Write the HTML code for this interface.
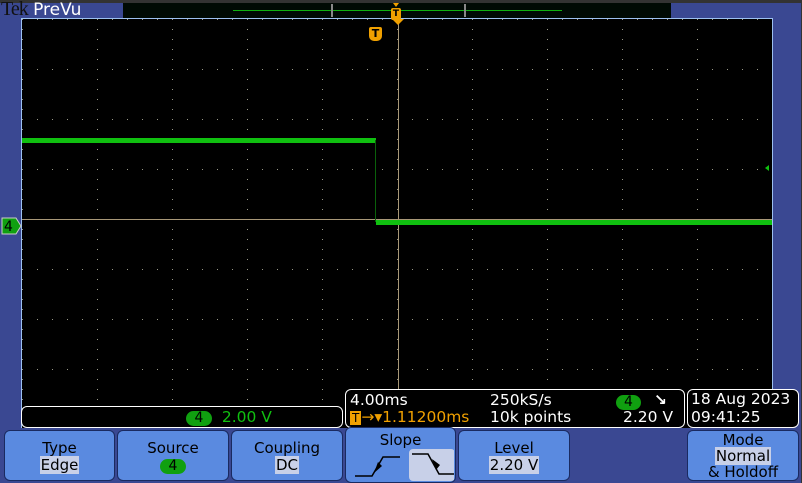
<!DOCTYPE html><html><head><meta charset="utf-8"><style>
*{margin:0;padding:0;box-sizing:border-box}
body{width:802px;height:483px;overflow:hidden;background:#3a4892;font-family:"DejaVu Sans","Liberation Sans",sans-serif;position:relative}
.a{position:absolute}
.btn{position:absolute;top:430px;height:51px;background:#5a8ae0;border:1px solid #1a2a60;border-radius:6px;text-align:center;color:#000;font-size:15px;line-height:17px;padding-top:9px}
.hl{background:#c8d0e8;padding:0 1px}
.pill{display:inline-block;background:#10a010;color:#000;border-radius:9px;width:26px;height:15px;line-height:15px;font-size:14px;text-align:center}
.box{position:absolute;background:#000;border:1px solid #fff;border-radius:6px;color:#fff;font-size:15.5px}
</style></head><body>
<div class="a" style="left:0;top:0;width:802px;height:3px;background:#333"></div>
<div class="a" style="left:1px;top:1px;width:123px;height:17px;color:#fff;font-size:17px;line-height:17px;white-space:nowrap"><span style="font-family:'Liberation Serif',serif;font-size:20px;color:#111;letter-spacing:-1px">Tek</span> PreVu</div>
<div class="a" style="left:123px;top:3px;width:548px;height:15px;background:#000a04"></div>
<div class="a" style="left:233px;top:10px;width:329px;height:1px;background:#10b010"></div>
<div class="a" style="left:331px;top:4px;width:2px;height:13px;background:#888"></div>
<div class="a" style="left:464px;top:4px;width:2px;height:13px;background:#888"></div>
<div class="a" style="left:801px;top:0;width:1px;height:483px;background:#333"></div>
<svg class="a" style="left:21px;top:18px" width="752" height="410">
<defs>
<pattern id="v" x="0" y="1" width="75" height="10" patternUnits="userSpaceOnUse"><rect x="1" y="0" width="1" height="1" fill="#998"/></pattern>
<pattern id="h" x="1" y="1" width="15" height="50" patternUnits="userSpaceOnUse"><rect x="0" y="0" width="1" height="1" fill="#998"/></pattern>
</defs>
<rect x="0" y="0" width="752" height="410" fill="#000"/>
<rect x="0" y="0" width="752" height="410" fill="url(#v)"/>
<rect x="0" y="0" width="752" height="410" fill="url(#h)"/>
<rect x="0" y="201" width="752" height="1" fill="#a89878"/>
<rect x="377" y="0" width="1" height="410" fill="#a89878"/>
<rect x="0" y="0" width="752" height="1" fill="#9cc0f0"/>
<rect x="0" y="0" width="1" height="410" fill="#9cc0f0"/>
<rect x="751" y="0" width="1" height="410" fill="#9cc0f0"/>
<rect x="1" y="120" width="354" height="5" fill="#10c010"/>
<rect x="354" y="122" width="1" height="82" fill="#0a600a"/>
<rect x="355" y="202" width="396" height="5" fill="#10c010"/>
<polygon points="748,153 744,150 748,147" fill="#10c010"/>
</svg>
<div class="a" style="left:369px;top:27px;width:13px;height:14px;background:#f0a000;border-radius:2px 2px 5px 5px;color:#000;font-size:11px;font-weight:bold;text-align:center;line-height:14px">T</div>
<div class="a" style="left:391px;top:8px;width:10px;height:12px;background:#f0a000;border-radius:2px;color:#000;font-size:9px;font-weight:bold;text-align:center;line-height:12px">T</div>
<div class="a" style="left:393px;top:3px;width:0;height:0;border-left:3px solid transparent;border-right:3px solid transparent;border-top:4px solid #f0a000"></div>
<div class="a" style="left:392px;top:19px;width:0;height:0;border-left:6px solid transparent;border-right:6px solid transparent;border-top:6px solid #f0a000"></div>
<svg class="a" style="left:1px;top:217px" width="21" height="18"><polygon points="1,1 15,1 20,9 15,17 1,17" fill="#10a010" stroke="#ccc" stroke-width="1"/><text x="3" y="14" font-size="14" font-family="DejaVu Sans" fill="#000">4</text></svg>
<div class="box" style="left:21px;top:406px;width:322px;height:22px;line-height:20px;color:#10c010;padding-left:164px"><span class="pill">4</span>&nbsp; 2.00 V</div>
<div class="box" style="left:345px;top:389px;width:340px;height:39px;line-height:18px">
<div class="a" style="left:4px;top:1px">4.00ms</div>
<div class="a" style="left:4px;top:18px;color:#f0a000;white-space:nowrap"><span style="background:#f0a000;color:#000;font-size:12px;padding:0 2px">T</span>→▾1.11200ms</div>
<div class="a" style="left:144px;top:1px">250kS/s</div>
<div class="a" style="left:144px;top:18px;white-space:nowrap">10k points</div>
<div class="a" style="left:270px;top:2px"><span class="pill" style="width:25px">4</span></div>
<div class="a" style="left:308px;top:1px;font-weight:bold">↘</div>
<div class="a" style="left:277px;top:18px;white-space:nowrap">2.20 V</div>
</div>
<div class="box" style="left:687px;top:389px;width:112px;height:39px;line-height:18px;padding-left:3px;white-space:nowrap">18 Aug 2023<br>09:41:25</div>
<div class="btn" style="left:4px;width:111px">Type<br><span class="hl">Edge</span></div>
<div class="btn" style="left:117px;width:112px">Source<br><span class="pill">4</span></div>
<div class="btn" style="left:231px;width:112px">Coupling<br><span class="hl">DC</span></div>
<div class="btn" style="left:345px;width:111px;top:427px;height:56px;padding-top:4px">Slope
<svg class="a" style="left:4px;top:20px" width="104" height="34"><path d="M5 28H22L33 9H50" stroke="#000" fill="none" stroke-width="1.5"/><polygon points="24,25 28,14 32,18" fill="#000"/><rect x="59" y="1" width="46" height="32" rx="4" fill="#c8d0e8"/><path d="M62 6H78L89 26H104" stroke="#000" fill="none" stroke-width="1.5"/><polygon points="82,11 86,22 90,17" fill="#000"/></svg></div>
<div class="btn" style="left:458px;width:112px">Level<br><span class="hl">2.20 V</span></div>
<div class="btn" style="left:687px;width:112px;padding-top:1px;line-height:16px">Mode<br><span class="hl">Normal</span><br>&amp; Holdoff</div>
</body></html>
